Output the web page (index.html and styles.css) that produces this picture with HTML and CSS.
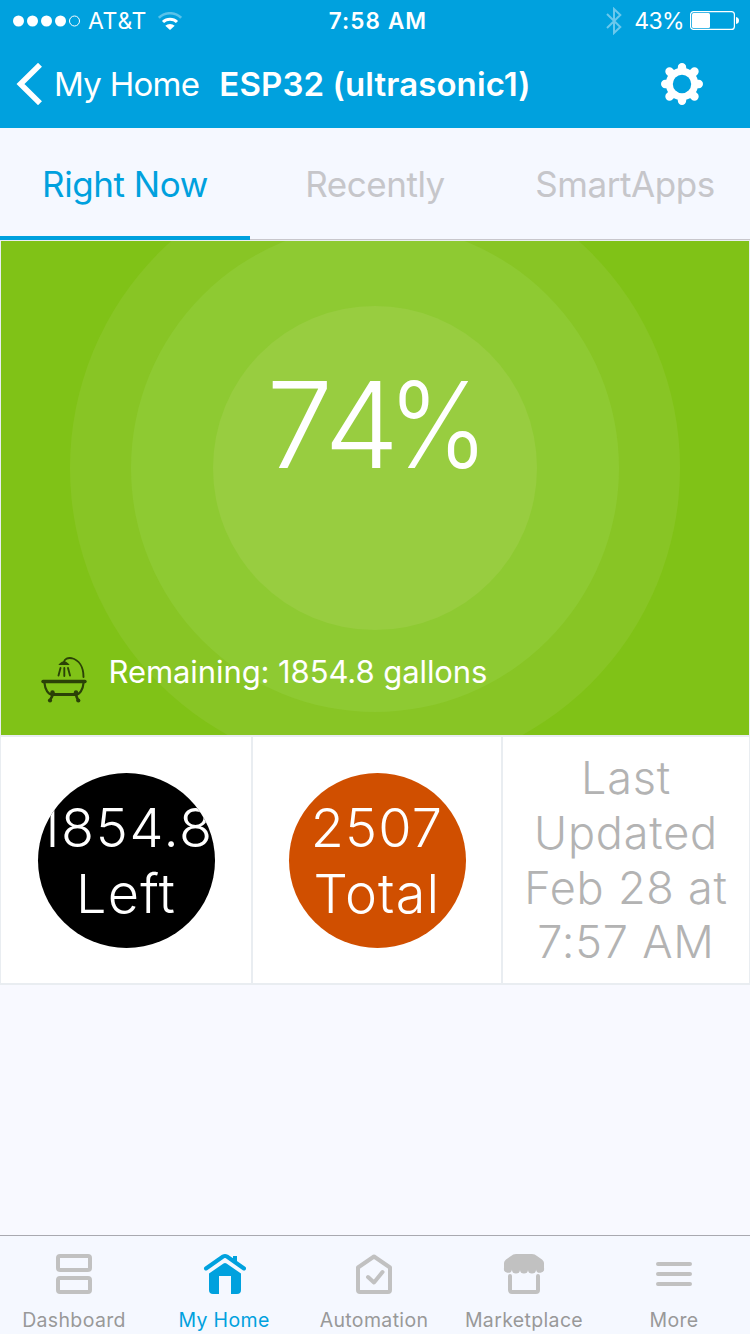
FILE: index.html
```html
<!DOCTYPE html>
<html lang="en">
<head>
  <meta charset="UTF-8" />
  <title>ESP32 (ultrasonic1)</title>
  <link rel="stylesheet" href="styles.css">
</head>
<body>
  <header>
    <div class="status-bar">
      <div class="status-left">
        <svg class="signal" width="68" height="12" viewBox="0 0 68 12">
          <g fill="#fff">
            <circle cx="5.5" cy="6" r="5.5" />
            <circle cx="19.5" cy="6" r="5.5" />
            <circle cx="33.5" cy="6" r="5.5" />
            <circle cx="47.5" cy="6" r="5.5" />
          </g>
          <circle cx="61.5" cy="6" r="5" fill="none" stroke="#fff" />
        </svg>
        <span class="carrier">AT&amp;T</span>
        <svg class="wifi" width="24" height="18" viewBox="0 0 24 18">
          <path d="M.9 5.8 A15.8 15.8 0 0 1 23.1 5.8" fill="none" stroke="#fff" stroke-opacity=".35" stroke-width="2.6" />
          <path d="M5 10 A10 10 0 0 1 19 10" fill="none" stroke="#fff" stroke-width="3" />
          <path d="M12 18 L7.3 13.8 A6.8 6.8 0 0 1 16.7 13.8 Z" fill="#fff" />
        </svg>
      </div>
      <span class="time">7:58 AM</span>
      <div class="status-right">
        <svg class="bluetooth" width="16" height="28" viewBox="0 0 16 28">
          <path d="M1 7 L14.3 20 L8 26 V2 L14.3 8 L1 21" fill="none" stroke="#fff" stroke-opacity=".42" stroke-width="2" />
        </svg>
        <span class="percent">43%</span>
        <svg class="battery" width="49" height="19" viewBox="0 0 49 19">
          <rect x=".6" y=".6" width="43.8" height="17.8" rx="3" fill="none" stroke="#fff" stroke-width="1.2" />
          <rect x="2" y="2" width="18" height="15" rx="1.5" fill="#fff" />
          <path d="M46 6 Q49 6.5 49 9.5 Q49 12.5 46 13 Z" fill="#fff" />
        </svg>
      </div>
    </div>

    <div class="nav-bar">
      <a class="back">
        <svg width="26" height="42" viewBox="0 0 26 42">
          <path d="M24 1.8 L4.5 21 L24 40.2" fill="none" stroke="#fff" stroke-width="5.6" />
        </svg>
        <span>My Home</span>
      </a>
      <h1>ESP32 (ultrasonic1)</h1>
      <svg class="gear" width="42" height="42" viewBox="-21 -21 42 42">
        <g stroke="#fff" stroke-width="8.4" stroke-linecap="round">
          <path d="M0 -16.8 V-12 M0 16.8 V12 M-16.8 0 H-12 M16.8 0 H12" />
          <path d="M-12.5 -12.5 L-9 -9 M12.5 12.5 L9 9 M-12.5 12.5 L-9 9 M12.5 -12.5 L9 -9" />
        </g>
        <circle r="12.4" fill="none" stroke="#fff" stroke-width="7.6" />
        <circle r="9.2" fill="#00a1de" />
      </svg>
    </div>
  </header>

  <nav class="tabs">
    <a class="tab active"><span>Right Now</span></a>
    <a class="tab"><span>Recently</span></a>
    <a class="tab"><span>SmartApps</span></a>
  </nav>

  <main>
    <section class="hero">
      <svg class="rings" width="748" height="494" viewBox="1 241 748 494">
        <circle cx="375" cy="468" r="305" fill="#88c525" />
        <circle cx="375" cy="468" r="244" fill="#8eca32" />
        <circle cx="375" cy="468" r="162" fill="#98cd40" />
      </svg>
      <div class="level">74<span class="unit">%</span></div>
      <div class="remaining">
        <svg width="48" height="48" viewBox="0 0 48 48" fill="none" stroke="#2b4207" stroke-linecap="round">
          <path d="M24 6 C24.5 2.8 28 1.6 31.5 2.2 C39 4 43.5 11 43.5 21" stroke-width="1.9" />
          <path d="M20.5 8 Q24 4.5 27.5 8 Z" fill="#2b4207" stroke-width="1.8" />
          <path d="M20.5 12 L18.5 19.5 M24.3 12 V20 M28 12 L30 19.5" stroke-width="1.9" />
          <path d="M3 25.5 H45" stroke-width="3.4" />
          <path d="M4.5 27 C5 34 8.5 38.5 12 38.5 H36 C39.5 38.5 43 34 43.5 27" stroke-width="2.2" />
          <path d="M12 38.5 H36" stroke-width="3.2" />
          <path d="M13 37 Q12.5 41 10 44 M36 37 Q36 41 38 44" stroke-width="2.6" />
          <g fill="#2b4207" stroke="none">
            <circle cx="12.5" cy="36.5" r="2.2" />
            <circle cx="36" cy="36.5" r="2.2" />
            <circle cx="10" cy="44.5" r="2.1" />
            <circle cx="38.3" cy="44.5" r="2.1" />
          </g>
        </svg>
        <span>Remaining: 1854.8 gallons</span>
      </div>
    </section>

    <section class="tiles">
      <div class="tile">
        <div class="circle black"><span>1854.8</span><span>Left</span></div>
      </div>
      <div class="tile">
        <div class="circle orange"><span>2507</span><span>Total</span></div>
      </div>
      <div class="tile">
        <p class="updated">Last<br>Updated<br>Feb 28 at<br>7:57 AM</p>
      </div>
    </section>
  </main>

  <footer>
    <a class="item">
      <svg width="44" height="44" viewBox="0 0 44 44" fill="none" stroke="#c1c1c1" stroke-width="4">
        <rect x="6" y="4" width="32" height="14" rx="2" />
        <rect x="6" y="26" width="32" height="14" rx="2" />
      </svg>
      <span>Dashboard</span>
    </a>
    <a class="item active">
      <svg width="44" height="44" viewBox="-1 0 44 44">
        <path d="M3 16.5 L20 4.5 Q22 3.5 24 4.5 L41 16.5" fill="none" stroke="#00a1de" stroke-width="4" stroke-linecap="round" />
        <path d="M30 4 H34 V12 L30 9 Z" fill="#00a1de" />
        <path d="M6 21.5 L20.5 11.5 Q22 10.5 23.5 11.5 L38 21.5 V38 Q38 42 34 42 H28 V24 H16 V42 H10 Q6 42 6 38 Z" fill="#00a1de" />
      </svg>
      <span>My Home</span>
    </a>
    <a class="item">
      <svg width="44" height="44" viewBox="0 0 44 44" fill="none" stroke="#c1c1c1" stroke-width="4" stroke-linejoin="round">
        <path d="M6 15.5 L22 4.5 L38 15.5 V38 Q38 40 36 40 H8 Q6 40 6 38 Z" />
        <path d="M16 25 L22 30.5 L30.5 20" stroke-linecap="round" />
      </svg>
      <span>Automation</span>
    </a>
    <a class="item">
      <svg width="44" height="44" viewBox="0 0 44 44">
        <path d="M14 2 H30 Q33 2 35 4 L40 7.5 Q42 9 42 11 V16 A4 4 0 0 1 34 17.5 A4 4 0 0 1 26 17.5 A4 4 0 0 1 18 17.5 A4 4 0 0 1 10 17.5 A4 4 0 0 1 2 16 V11 Q2 9 4 7.5 L9 4 Q11 2 14 2 Z" fill="#c1c1c1" />
        <path d="M8 24 V38 Q8 40 10 40 H34 Q36 40 36 38 V24" fill="none" stroke="#c1c1c1" stroke-width="4" stroke-linecap="round" />
      </svg>
      <span>Marketplace</span>
    </a>
    <a class="item">
      <svg width="44" height="44" viewBox="0 0 44 44">
        <path d="M6 12 H38 M6 22 H38 M6 32 H38" stroke="#c1c1c1" stroke-width="4" stroke-linecap="round" />
      </svg>
      <span>More</span>
    </a>
  </footer>
</body>
</html>
```

FILE: styles.css
```css
* {
  box-sizing: border-box;
}

body {
  font-family: Inter, 'Liberation Sans', sans-serif;
  background-color: #f8f9ff;
  display: flex;
  flex-direction: column;
  height: 1334px;
  margin: 0;
  overflow: hidden;
}

svg {
  display: block;
  flex: none;
}

span, h1 {
  white-space: nowrap;
}

header {
  background: #00a1de;
  color: white;
  height: 128px;
}

/* status bar */
.status-bar {
  display: grid;
  grid-template-columns: 1fr auto 1fr;
  align-items: center;
  height: 41px;
  padding: 0 11px 0 13px;
  font-size: 23px;
}

.status-left, .status-right {
  display: flex;
  align-items: center;
}

.status-right {
  justify-content: flex-end;
}

.carrier {
  margin-left: 7px;
  letter-spacing: 0.7px;
}

.wifi {
  margin-left: 11px;
}

.time {
  font-weight: 600;
  font-size: 22.5px;
  letter-spacing: 1.1px;
  margin-left: 4px;
}

.percent {
  margin: 0 6px 0 12px;
  font-size: 23px;
  letter-spacing: -0.6px;
}

/* navigation */
.nav-bar {
  display: flex;
  align-items: center;
  height: 86px;
  padding: 0 47px 0 16px;
}

.back {
  display: flex;
  align-items: center;
  font-size: 33px;
  letter-spacing: -0.7px;
}

.back span {
  margin-left: 12px;
}

h1 {
  margin: 0 0 0 20px;
  font-size: 33px;
  font-weight: 600;
  letter-spacing: 0.1px;
}

.gear {
  margin-left: auto;
}

/* tabs */
.tabs {
  display: grid;
  grid-template-columns: repeat(3, 1fr);
  height: 112px;
  background: #f5f8ff;
}

.tab {
  display: flex;
  align-items: center;
  justify-content: center;
  font-size: 35px;
  letter-spacing: -0.45px;
  color: #c6c6ca;
  border-bottom: 1px solid #c8c7cc;
  padding-top: 1px;
}

.tab.active {
  color: #00a1de;
  border-bottom: 4px solid #00a1de;
  padding-top: 4px;
}

/* main tile */
main {
  height: 745px;
  border: 1px solid #e9edf1;
  background: white;
}

.hero {
  position: relative;
  height: 494px;
  background: #80c217;
  color: white;
}

.rings {
  position: absolute;
  top: 0;
  left: 0;
}

.level {
  position: relative;
  padding: 112px 0 0 14px;
  height: 412px;
  text-align: center;
  font-size: 119px;
  line-height: 144px;
  font-weight: 300;
  letter-spacing: -2px;
}

.unit {
  display: inline-block;
  margin-left: -9px;
  transform: scaleX(0.9);
  transform-origin: left;
}

.remaining {
  position: relative;
  display: flex;
  align-items: flex-start;
  padding-left: 39px;
  font-size: 31px;
  letter-spacing: -0.08px;
}

.remaining svg {
  margin-top: 3px;
}

.remaining span {
  margin-left: 20.5px;
  line-height: 38px;
}

.tiles {
  display: grid;
  grid-template-columns: 252px 250px 246px;
  height: 249px;
  border-top: 2px solid #e9edf1;
  border-bottom: 1px solid #e9edf1;
}

.tile {
  display: flex;
  justify-content: center;
  align-items: center;
  border-right: 2px solid #e9edf1;
}

.tile:last-child {
  border-right: none;
}

.circle {
  width: 177px;
  height: 175px;
  padding-top: 1px;
  border-radius: 50%;
  display: flex;
  flex-direction: column;
  align-items: center;
  justify-content: center;
  overflow: hidden;
  color: white;
  font-size: 54px;
  font-weight: 300;
  line-height: 66px;
  letter-spacing: 1.2px;
}

.black {
  background: black;
}

.black span:first-child {
  letter-spacing: 1.7px;
}

.orange {
  background: #d04f00;
}

.updated {
  margin: 0;
  padding-top: 1px;
  text-align: center;
  color: #b3b3b3;
  font-size: 45px;
  font-weight: 300;
  line-height: 54.7px;
  letter-spacing: 0.8px;
}

/* bottom bar */
footer {
  display: grid;
  grid-template-columns: repeat(5, 150px);
  margin-top: auto;
  height: 99px;
  border-top: 1px solid #a9a9b0;
  background: #f5f8ff;
}

.item {
  display: flex;
  flex-direction: column;
  align-items: center;
  padding: 16px 2px 0 0;
  font-size: 19.5px;
  line-height: 24px;
  letter-spacing: 0.35px;
  color: #999;
}

.item span {
  margin-top: 12px;
}

.item.active {
  color: #00a1de;
}
```
